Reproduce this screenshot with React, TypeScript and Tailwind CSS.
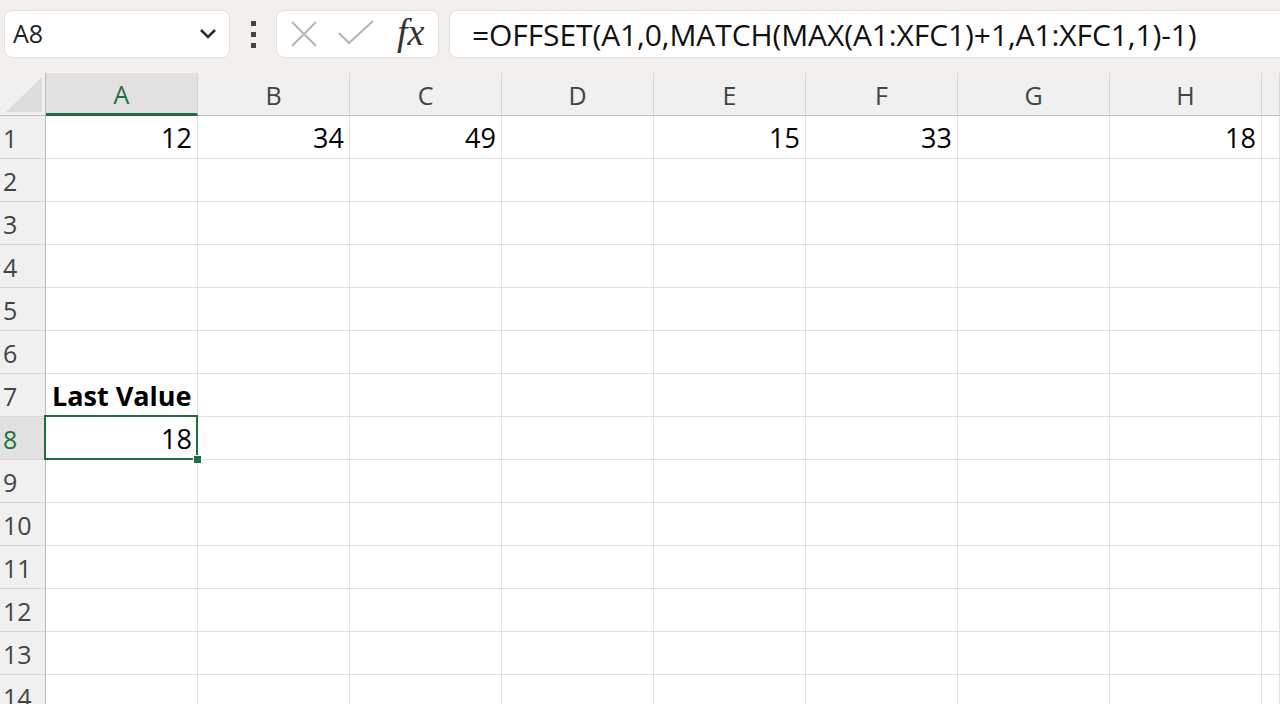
import React from 'react';

const COLS = ['A', 'B', 'C', 'D', 'E', 'F', 'G', 'H', ''];
const ROWS = Array.from({ length: 14 }, (_, i) => i + 1);

const data: Record<string, { v: string; bold?: boolean; left?: boolean }> = {
  A1: { v: '12' },
  B1: { v: '34' },
  C1: { v: '49' },
  E1: { v: '15' },
  F1: { v: '33' },
  H1: { v: '18' },
  A7: { v: 'Last Value', bold: true, left: true },
  A8: { v: '18' },
};

const font = { fontFamily: '"Open Sans", "Liberation Sans", sans-serif' };

function Toolbar() {
  return (
    <div className="h-[73px] bg-[#f3efed] flex items-start pt-[10px] pl-1 gap-0">
      {/* name box */}
      <div className="w-[226px] h-[48px] bg-white rounded-lg border border-[#e4e0de] flex items-center justify-between pl-2 pr-3">
        <span className="text-[25px] text-[#222]">A8</span>
        <svg width="18" height="12" viewBox="0 0 18 12">
          <path d="M2 2 L9 9 L16 2" fill="none" stroke="#2b2b2b" strokeWidth="2.6" />
        </svg>
      </div>
      <div className="w-[46px] h-[48px] flex flex-col items-center justify-center gap-[6px]">
        <div className="w-[5px] h-[5px] bg-[#444]" />
        <div className="w-[5px] h-[5px] bg-[#444]" />
        <div className="w-[5px] h-[5px] bg-[#444]" />
      </div>
      <div className="w-[163px] h-[48px] bg-white rounded-lg border border-[#e4e0de] flex items-center px-3 gap-[18px]">
        <svg width="30" height="30" viewBox="0 0 30 30">
          <path d="M3 3 L27 27 M27 3 L3 27" stroke="#b4b4b4" strokeWidth="2" />
        </svg>
        <svg width="38" height="30" viewBox="0 0 38 30">
          <path d="M2 14 L12 24 L36 2" fill="none" stroke="#b4b4b4" strokeWidth="2" />
        </svg>
        <span
          className="text-[38px] italic text-[#333] leading-none -mt-1 ml-1"
          style={{ fontFamily: '"Liberation Serif", "DejaVu Serif", serif' }}
        >
          fx
        </span>
      </div>
      <div className="ml-[10px] flex-1 h-[48px] bg-white rounded-l-lg border border-r-0 border-[#e4e0de] flex items-center pl-[22px]">
        <span className="text-[30px] text-[#111] tracking-[-0.1px] whitespace-nowrap">
          =OFFSET(A1,0,MATCH(MAX(A1:XFC1)+1,A1:XFC1,1)-1)
        </span>
      </div>
    </div>
  );
}

export default function App() {
  return (
    <div className="w-[1280px] h-[704px] overflow-hidden bg-white" style={font}>
      <Toolbar />
      <div className="grid grid-cols-[46px_repeat(8,152px)_1fr]">
        {/* header row */}
        <div className="h-[43px] bg-[#f0f0f0] border-b border-r border-[#bdbdbd] flex items-end justify-end p-[3px]">
          <svg width="36" height="35" viewBox="0 0 36 35">
            <path d="M36 0 L36 35 L0 35 Z" fill="#dcdcdc" />
          </svg>
        </div>
        {COLS.map((c, i) => (
          <div
            key={c + i}
            className={
              'h-[43px] flex items-center justify-center pt-[3px] text-[25px] border-r border-[#d6d6d6] ' +
              (c === 'A'
                ? 'bg-[#e1e1e1] text-[#1e6e42] border-b-[3px] border-b-[#1e6e42]'
                : 'bg-[#f0f0f0] text-[#444] border-b border-b-[#bdbdbd]')
            }
          >
            {c}
          </div>
        ))}
        {ROWS.map((r) => (
          <React.Fragment key={r}>
            <div
              className={
                'h-[43px] flex items-center pl-[3px] pt-[3px] text-[25px] border-b border-r ' +
                (r === 8
                  ? 'bg-[#e1e1e1] text-[#1e6e42] border-b-[#d6d6d6] border-r-[#1e6e42]'
                  : 'bg-[#f0f0f0] text-[#444] border-b-[#d6d6d6] border-r-[#bdbdbd]')
              }
            >
              {r}
            </div>
            {COLS.map((c, i) => {
              const cell = c ? data[c + r] : undefined;
              const selected = c === 'A' && r === 8;
              return (
                <div
                  key={c + i + r}
                  className={
                    'relative h-[43px] border-b border-r border-[#e1e1e1] flex items-center pt-[3px] text-[27px] text-black ' +
                    (cell?.left ? 'justify-start pl-[6px] ' : 'justify-end pr-[5px] ') +
                    (cell?.bold ? 'font-bold ' : '') +
                    (selected ? 'z-10' : '')
                  }
                >
                  {cell && <span className="whitespace-nowrap">{cell.v}</span>}
                  {selected && (
                    <>
                      <div className="absolute -left-[2px] -top-[2px] -right-[1px] -bottom-[1px] border-2 border-[#1e6e42] pointer-events-none" />
                      <div className="absolute -right-[5px] -bottom-[5px] w-[9px] h-[9px] bg-[#1e6e42] border border-white" />
                    </>
                  )}
                </div>
              );
            })}
          </React.Fragment>
        ))}
      </div>
    </div>
  );
}
